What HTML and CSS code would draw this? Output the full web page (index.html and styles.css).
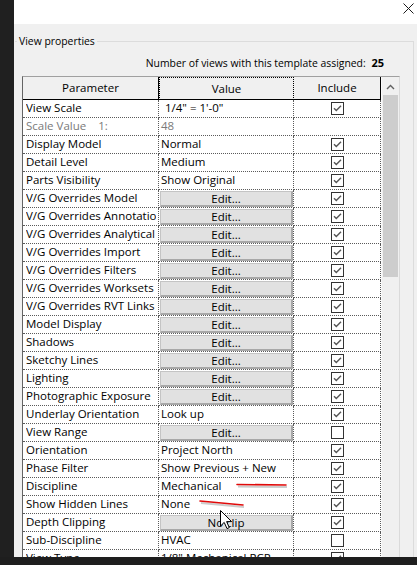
FILE: index.html
```html
<!DOCTYPE html>
<html>
<head>
<meta charset="utf-8">
<title>View properties</title>
<link rel="stylesheet" href="styles.css">
</head>
<body>
<div class="screen">
  <div class="left-strip"></div>
  <div class="window">
    <div class="titlebar">
      <svg class="close" width="11" height="11" viewBox="0 0 11 11"><path d="M0.5 0.5 L10.5 10.5 M10.5 0.5 L0.5 10.5" stroke="#1a1a1a" stroke-width="1" fill="none"/></svg>
    </div>
    <div class="content">
      <fieldset class="group">
        <legend>View properties</legend>
        <div class="count">Number of views with this template assigned: <b>25</b></div>
        <div class="frame">
          <div class="grid">
            <div class="hcell">Parameter</div>
            <div class="hcell focus">Value</div>
            <div class="hcell">Include</div>

            <div class="pcell"><span>View Scale</span></div>
            <div class="vcell combo">1/4" = 1'-0"</div>
            <div class="ccell"><span class="cb on"></span></div>

            <div class="pcell gray"><span>Scale Value<i class="ratio">1:</i></span></div>
            <div class="vcell gray">48</div>
            <div class="ccell"></div>

            <div class="pcell"><span>Display Model</span></div>
            <div class="vcell">Normal</div>
            <div class="ccell"><span class="cb on"></span></div>

            <div class="pcell"><span>Detail Level</span></div>
            <div class="vcell">Medium</div>
            <div class="ccell"><span class="cb on"></span></div>

            <div class="pcell"><span>Parts Visibility</span></div>
            <div class="vcell">Show Original</div>
            <div class="ccell"><span class="cb on"></span></div>

            <div class="pcell"><span>V/G Overrides Model</span></div>
            <div class="bcell"><span class="btn">Edit...</span></div>
            <div class="ccell"><span class="cb on"></span></div>

            <div class="pcell"><span>V/G Overrides Annotation</span></div>
            <div class="bcell"><span class="btn">Edit...</span></div>
            <div class="ccell"><span class="cb on"></span></div>

            <div class="pcell"><span>V/G Overrides Analytical Model</span></div>
            <div class="bcell"><span class="btn">Edit...</span></div>
            <div class="ccell"><span class="cb on"></span></div>

            <div class="pcell"><span>V/G Overrides Import</span></div>
            <div class="bcell"><span class="btn">Edit...</span></div>
            <div class="ccell"><span class="cb on"></span></div>

            <div class="pcell"><span>V/G Overrides Filters</span></div>
            <div class="bcell"><span class="btn">Edit...</span></div>
            <div class="ccell"><span class="cb on"></span></div>

            <div class="pcell"><span>V/G Overrides Worksets</span></div>
            <div class="bcell"><span class="btn">Edit...</span></div>
            <div class="ccell"><span class="cb on"></span></div>

            <div class="pcell"><span>V/G Overrides RVT Links</span></div>
            <div class="bcell"><span class="btn">Edit...</span></div>
            <div class="ccell"><span class="cb on"></span></div>

            <div class="pcell"><span>Model Display</span></div>
            <div class="bcell"><span class="btn">Edit...</span></div>
            <div class="ccell"><span class="cb on"></span></div>

            <div class="pcell"><span>Shadows</span></div>
            <div class="bcell"><span class="btn">Edit...</span></div>
            <div class="ccell"><span class="cb on"></span></div>

            <div class="pcell"><span>Sketchy Lines</span></div>
            <div class="bcell"><span class="btn">Edit...</span></div>
            <div class="ccell"><span class="cb on"></span></div>

            <div class="pcell"><span>Lighting</span></div>
            <div class="bcell"><span class="btn">Edit...</span></div>
            <div class="ccell"><span class="cb on"></span></div>

            <div class="pcell"><span>Photographic Exposure</span></div>
            <div class="bcell"><span class="btn">Edit...</span></div>
            <div class="ccell"><span class="cb on"></span></div>

            <div class="pcell"><span>Underlay Orientation</span></div>
            <div class="vcell">Look up</div>
            <div class="ccell"><span class="cb on"></span></div>

            <div class="pcell"><span>View Range</span></div>
            <div class="bcell"><span class="btn">Edit...</span></div>
            <div class="ccell"><span class="cb"></span></div>

            <div class="pcell"><span>Orientation</span></div>
            <div class="vcell">Project North</div>
            <div class="ccell"><span class="cb on"></span></div>

            <div class="pcell"><span>Phase Filter</span></div>
            <div class="vcell">Show Previous + New</div>
            <div class="ccell"><span class="cb on"></span></div>

            <div class="pcell"><span>Discipline</span></div>
            <div class="vcell">Mechanical</div>
            <div class="ccell"><span class="cb on"></span></div>

            <div class="pcell"><span>Show Hidden Lines</span></div>
            <div class="vcell">None</div>
            <div class="ccell"><span class="cb on"></span></div>

            <div class="pcell"><span>Depth Clipping</span></div>
            <div class="bcell"><span class="btn">No clip</span></div>
            <div class="ccell"><span class="cb on"></span></div>

            <div class="pcell"><span>Sub-Discipline</span></div>
            <div class="vcell">HVAC</div>
            <div class="ccell"><span class="cb"></span></div>

            <div class="pcell"><span>View Type</span></div>
            <div class="vcell">1/8" Mechanical RCP</div>
            <div class="ccell"><span class="cb on"></span></div>
          </div>
          <div class="scrollbar">
            <div class="sb-up"><svg width="9" height="6" viewBox="0 0 9 6"><path d="M1 5 L4.5 1.5 L8 5" stroke="#606060" stroke-width="1.4" fill="none"/></svg></div>
            <div class="sb-thumb"></div>
          </div>
        </div>
      </fieldset>
    </div>
  </div>

  <svg class="marks" width="417" height="557" viewBox="0 0 417 557">
    <path d="M238 486.5 L287 487" stroke="#9a9a9a" stroke-width="2" opacity="0.5" fill="none"/>
    <path d="M237 484.5 L286 485" stroke="#e00a0a" stroke-width="1.6" fill="none" stroke-linecap="round"/>
    <path d="M201 503 L244 507" stroke="#9a9a9a" stroke-width="2" opacity="0.5" fill="none"/>
    <path d="M200 501 L243 505" stroke="#e00a0a" stroke-width="1.6" fill="none" stroke-linecap="round"/>
  </svg>
  <svg class="cursor" width="14" height="20" viewBox="0 0 14 20">
    <path d="M0.5 0.5 L0.5 16 L4.2 12.4 L7 18.6 L9.3 17.6 L6.6 11.6 L11.6 11.6 Z" fill="#fff" stroke="#000" stroke-width="1" stroke-linejoin="round"/>
  </svg>
</div>
</body>
</html>
```
FILE: styles.css
```css
html, body {
  margin: 0;
  padding: 0;
}
body {
  background: #1e1e1e;
  font-family: "Open Sans", "Noto Sans", sans-serif;
  font-size: 11.5px;
  color: #000;
  width: 417px;
  height: 565px;
  overflow: hidden;
}
.screen {
  position: relative;
  display: flex;
  height: 557px;
  overflow: hidden;
}
.left-strip {
  flex: none;
  width: 14px;
  background: #202020;
}
.window {
  flex: 1;
  min-width: 0;
  background: #f0f0f0;
  display: flex;
  flex-direction: column;
}
.titlebar {
  flex: none;
  height: 24px;
  background: #fff;
  display: flex;
  justify-content: flex-end;
  align-items: flex-start;
  padding-right: 3px;
}
.close {
  margin-top: 3px;
}
.content {
  padding: 9px 3px 0 1px;
}
.group {
  margin: 0;
  padding: 0 13px 0 7px;
  border: 0;
  border-top: 1px solid #dcdcdc;
  border-right: 1px solid #dcdcdc;
  min-width: 0;
}
.group legend {
  padding: 0 2px;
  margin-left: -5px;
  line-height: 16px;
  font-size: 10.4px;
}
.count {
  text-align: right;
  padding-right: 16px;
  line-height: 16px;
  margin: 6px 0 5px;
  font-size: 10.4px;
}
.count b {
  font-weight: 700;
  font-size: 11px;
  margin-left: 3px;
}
.frame {
  display: flex;
  height: 600px;
  border-top: 1px solid #a0a0a0;
  border-left: 1px solid #646464;
  border-right: 1px solid #dadada;
}
.grid {
  display: grid;
  grid-template-columns: 136px 135px 87px;
  grid-template-rows: 23px;
  grid-auto-rows: 18px;
  align-content: start;
  background: #fff;
}
.grid > div {
  box-sizing: border-box;
  overflow: hidden;
  white-space: nowrap;
}
.hcell {
  background: #f0f0f0;
  text-align: center;
  line-height: 21px;
  border-right: 1px solid #000;
  border-bottom: 1px solid #000;
}
.hcell.focus {
  border: 1px dotted #000;
  border-bottom: 1px solid #000;
}
.pcell, .vcell, .bcell, .ccell {
  border-right: 1px dotted #5a5a5a;
  border-bottom: 1px dotted #5a5a5a;
  line-height: 15px;
}
.pcell {
  padding-left: 3px;
  padding-right: 2px;
}
.pcell span {
  display: block;
  overflow: hidden;
}
.vcell {
  padding-left: 2px;
}
.vcell.combo {
  padding-left: 6px;
}
.gray {
  color: #7a7a7a;
}
.ratio {
  font-style: normal;
  margin-left: 12px;
}
.bcell {
  padding: 1px 0 0 1px;
}
.btn {
  display: block;
  box-sizing: border-box;
  height: 16px;
  background: #e1e1e1;
  border: 1px solid #c4c4c4;
  border-right: 2px solid #a8a8a8;
  border-bottom: 2px solid #a8a8a8;
  text-align: center;
  line-height: 13px;
}
.ccell {
  display: flex;
  justify-content: center;
  align-items: center;
}
.cb {
  box-sizing: border-box;
  width: 13px;
  height: 13px;
  border: 1px solid #333;
  background: #fff;
  margin-bottom: 1px;
}
.cb.on {
  background: #fff url("data:image/svg+xml,%3Csvg xmlns='http://www.w3.org/2000/svg' width='11' height='11' viewBox='0 0 11 11'%3E%3Cpath d='M2 5.2 L4.3 7.5 L9 2.8' stroke='%23555' stroke-width='1.4' fill='none'/%3E%3C/svg%3E") no-repeat center;
}
.scrollbar {
  flex: none;
  box-sizing: border-box;
  width: 18px;
  background: #f0f0f0;
  border-left: 1px solid #fafafa;
  display: flex;
  flex-direction: column;
  align-items: center;
}
.sb-up {
  height: 18px;
  width: 100%;
  display: flex;
  justify-content: center;
  align-items: center;
  padding-top: 2px;
  box-sizing: border-box;
}
.sb-thumb {
  width: 15px;
  height: 182px;
  background: #cdcdcd;
}
.marks {
  position: absolute;
  left: 0;
  top: 0;
  pointer-events: none;
}
.cursor {
  position: absolute;
  left: 220px;
  top: 510px;
}
```
